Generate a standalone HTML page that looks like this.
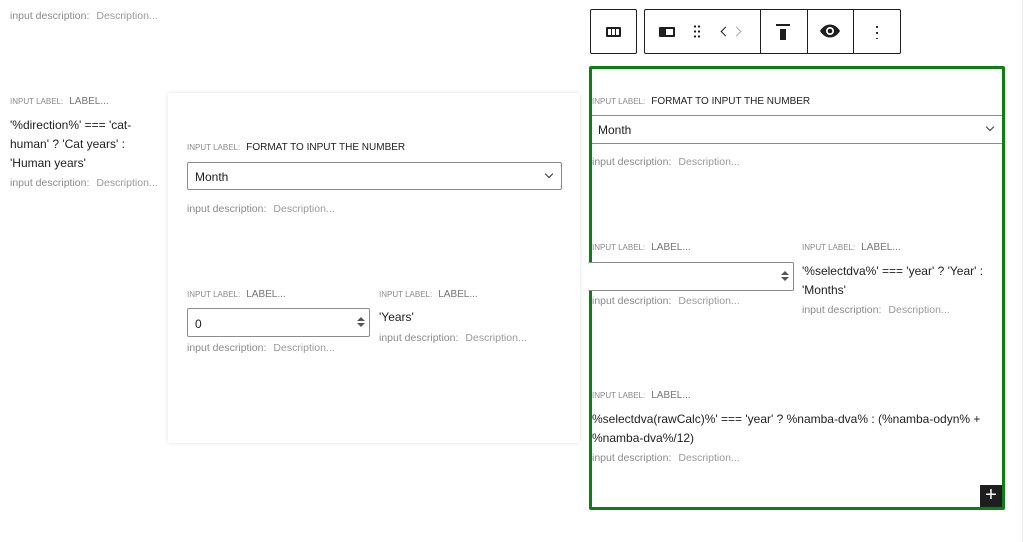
<!DOCTYPE html>
<html><head><style>
*{margin:0;padding:0;box-sizing:border-box}
body{width:1024px;height:542px;background:#fff;position:relative;overflow:hidden;font-family:"Liberation Sans",sans-serif;color:#1e1e1e}
.a{position:absolute;white-space:nowrap}
.lb{font-size:8px;color:#8a8a8a;text-transform:uppercase}
.lb b{font-weight:normal;font-size:10px;margin-left:6px;color:#757575}
.lb b.k{color:#1e1e1e}
.ds{font-size:10.5px;color:#8a8a8a}
.ds span{margin-left:7px;color:#9a9a9a}
.v{font-size:12px;line-height:19px;color:#1e1e1e}
.box{position:absolute;border:1px solid #8c8c8c;border-radius:2px;background:#fff;font-size:12px}
.chev{position:absolute;right:9px;top:8px;width:6px;height:6px;border-right:1.5px solid #333;border-bottom:1.5px solid #333;transform:rotate(45deg)}
.spin{position:absolute;right:8px;top:8px;width:0;height:0}
.spin:before{content:"";position:absolute;left:-4px;top:0;border:4px solid transparent;border-bottom:4px solid #555;border-top:0}
.spin:after{content:"";position:absolute;left:-4px;top:6px;border:4px solid transparent;border-top:4px solid #555;border-bottom:0}
.tb{position:absolute;border:1px solid #1e1e1e;border-radius:2px;height:45px;top:9px;background:#fff}
</style></head><body>
<div class="a ds" style="left:10px;top:10px">input description:<span>Description...</span></div>

<div class="a lb" style="left:10px;top:96px">Input label:<b>LABEL...</b></div>
<div class="a v" style="left:10px;top:116px;white-space:normal;width:150px">'%direction%' === 'cat-human' ? 'Cat years' : 'Human years'</div>
<div class="a ds" style="left:10px;top:177px">input description:<span>Description...</span></div>

<div class="a" style="left:168px;top:93px;width:412px;height:350px;box-shadow:0 0 4px rgba(0,0,0,.12)"></div>
<div class="a lb" style="left:187px;top:142px">Input label:<b class="k">FORMAT TO INPUT THE NUMBER</b></div>
<div class="box" style="left:187px;top:162px;width:375px;height:28px;padding:7px 0 0 7px">Month<div class="chev"></div></div>
<div class="a ds" style="left:187px;top:203px">input description:<span>Description...</span></div>
<div class="a lb" style="left:187px;top:289px">Input label:<b>LABEL...</b></div>
<div class="box" style="left:187px;top:308px;width:183px;height:29px;padding:8px 0 0 7px">0<div class="spin"></div></div>
<div class="a ds" style="left:187px;top:342px">input description:<span>Description...</span></div>
<div class="a lb" style="left:379px;top:289px">Input label:<b>LABEL...</b></div>
<div class="a v" style="left:379px;top:308px">'Years'</div>
<div class="a ds" style="left:379px;top:332px">input description:<span>Description...</span></div>

<div class="tb" style="left:590px;width:47px"><div style="position:absolute;left:15px;top:17px;width:15px;height:10px;border:2px solid #1e1e1e;border-radius:1px"><div style="position:absolute;left:3px;top:0;width:1px;height:6px;background:#1e1e1e"></div><div style="position:absolute;left:7px;top:0;width:1px;height:6px;background:#1e1e1e"></div></div></div>
<div class="tb" style="left:644px;width:257px">
 <div style="position:absolute;left:14px;top:17px;width:16px;height:10px;border:2px solid #1e1e1e;border-radius:1px"><div style="position:absolute;left:0;top:0;width:5px;height:6px;background:#1e1e1e"></div></div>
 <div style="position:absolute;left:48px;top:14px;width:8px;height:15px;background:radial-gradient(circle,#1e1e1e 1px,transparent 1.3px) 0 0/4px 5px"></div>
 <div style="position:absolute;left:77px;top:18px;width:7px;height:7px;border-left:1.5px solid #1e1e1e;border-bottom:1.5px solid #1e1e1e;transform:rotate(45deg)"></div>
 <div style="position:absolute;left:88px;top:18px;width:7px;height:7px;border-right:1.5px solid #aaa;border-top:1.5px solid #aaa;transform:rotate(45deg)"></div>
 <div style="position:absolute;left:115px;top:0;width:1px;height:43px;background:#1e1e1e"></div>
 <div style="position:absolute;left:131px;top:14px;width:14px;height:2px;background:#1e1e1e"></div>
 <div style="position:absolute;left:135px;top:19px;width:6px;height:11px;background:#1e1e1e"></div>
 <div style="position:absolute;left:162px;top:0;width:1px;height:43px;background:#1e1e1e"></div>
 <svg style="position:absolute;left:174px;top:13px" width="22" height="16" viewBox="0 0 22 16"><path d="M1 8C4 3 8 1.5 11 1.5S18 3 21 8C18 13 14 14.5 11 14.5S4 13 1 8Z" fill="#1e1e1e"/><circle cx="11" cy="8" r="4" fill="#fff"/><circle cx="11" cy="8" r="2.3" fill="#1e1e1e"/></svg>
 <div style="position:absolute;left:208px;top:0;width:1px;height:43px;background:#1e1e1e"></div>
 <div style="position:absolute;left:231px;top:14px;width:2px;height:15px;background:radial-gradient(circle,#1e1e1e 1px,transparent 1.2px) 0 0/2px 6px"></div>
</div>

<div class="a" style="left:589px;top:66px;width:416px;height:444px;border:3px solid #0d7f12;border-radius:2px"></div>
<div class="a lb" style="left:592px;top:96px">Input label:<b class="k">FORMAT TO INPUT THE NUMBER</b></div>
<div class="a" style="left:592px;top:115px;width:410px;height:29px;border-top:1px solid #8c8c8c;border-bottom:1px solid #8c8c8c;font-size:12px;padding:7px 0 0 6px">Month<div class="chev"></div></div>
<div class="a ds" style="left:592px;top:156px">input description:<span>Description...</span></div>
<div class="a lb" style="left:592px;top:242px">Input label:<b>LABEL...</b></div>
<div class="box" style="left:588px;top:262px;width:206px;height:29px;border-left:none"><div class="spin"></div></div>
<div class="a ds" style="left:592px;top:295px">input description:<span>Description...</span></div>
<div class="a lb" style="left:802px;top:242px">Input label:<b>LABEL...</b></div>
<div class="a v" style="left:802px;top:262px">'%selectdva%' === 'year' ? 'Year' :<br>'Months'</div>
<div class="a ds" style="left:802px;top:304px">input description:<span>Description...</span></div>
<div class="a lb" style="left:592px;top:390px">Input label:<b>LABEL...</b></div>
<div class="a v" style="left:592px;top:410px">%selectdva(rawCalc)%' === 'year' ? %namba-dva% : (%namba-odyn% +<br>%namba-dva%/12)</div>
<div class="a ds" style="left:592px;top:452px">input description:<span>Description...</span></div>
<div class="a" style="left:980px;top:485px;width:22px;height:22px;background:#1e1e1e;color:#fff;font-size:20px;line-height:21px;text-align:center">+</div>
<div class="a" style="left:1022px;top:0;width:1px;height:542px;background:#eee"></div>
</body></html>
